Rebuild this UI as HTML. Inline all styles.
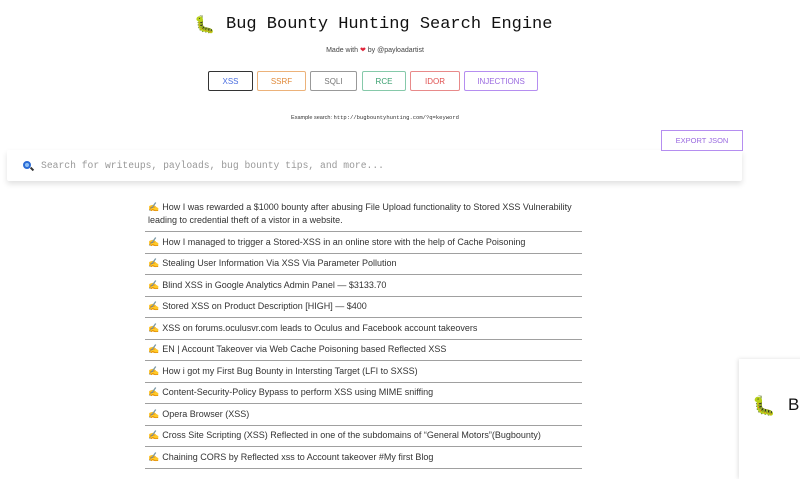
<!DOCTYPE html>
<html><head><meta charset="utf-8"><style>
*{margin:0;padding:0;box-sizing:border-box}
body{width:800px;height:470px;overflow:hidden;background:#fff;font-family:"Liberation Sans","Noto Sans CJK KR",sans-serif;position:relative;color:#333}
.title{position:absolute;left:226px;top:12px;font-family:"Liberation Mono",monospace;font-size:17px;color:#111;line-height:26px;white-space:nowrap}
.emo{position:absolute;left:194px;top:15px;font-family:"Noto Color Emoji","DejaVu Sans",sans-serif;font-size:17px;color:#2a2}
.made{position:absolute;top:46px;left:0;width:750px;text-align:center;font-size:7px;color:#444}
.btn{position:absolute;top:71px;height:20px;border:1px solid;border-radius:2px;font-size:8px;display:flex;align-items:center;justify-content:center}
.ex{position:absolute;top:114px;left:0;width:750px;text-align:center;font-size:5.5px;color:#333}
.ex code{font-family:"Liberation Mono",monospace}
.exp{position:absolute;left:661px;top:130px;width:82px;height:21px;border:1px solid #b58ef0;color:#9a6ae0;font-size:7.5px;display:flex;align-items:center;justify-content:center;background:#fff;z-index:2}
.search{position:absolute;left:7px;top:150px;width:735px;height:31px;background:#fff;box-shadow:0 3px 6px rgba(0,0,0,.12);border-radius:2px}
.search .ic{position:absolute;left:16px;top:11px;width:8px;height:8px;border:2px solid #2a6bd6;border-radius:50%;background:#8fc0f5}
.search .ic:after{content:"";position:absolute;left:5px;top:5px;width:4px;height:2px;background:#333;transform:rotate(45deg)}
.search .ph{position:absolute;left:34px;top:10px;font-family:"Liberation Mono",monospace;font-size:9.7px;color:#999}
.list{position:absolute;left:145px;top:200px;width:437px}
.it{border-bottom:1px solid #a0a0a0;font-size:9px;line-height:13px;padding:3.5px 3px 4px;color:#333;white-space:nowrap;overflow:hidden}
.it:first-child{padding-top:1px;white-space:normal}
.it b{font-weight:normal;color:#f0a020;margin-right:3px}
.side{position:absolute;left:739px;top:359px;width:70px;height:120px;background:#fff;box-shadow:-1px 0 4px rgba(0,0,0,.12)}
.side span{position:absolute;left:13px;top:35px;font-size:19px;color:#2a2}
.side i{position:absolute;left:49px;top:36px;font-style:normal;font-size:17px;color:#111}
</style></head><body>
<div class="emo">🐛</div>
<div class="title">Bug Bounty Hunting Search Engine</div>
<div class="made">Made with <span style="color:#e0243a">❤</span> by @payloadartist</div>
<div class="btn" style="left:208px;width:45px;border-color:#333;border-width:1.5px;color:#4a6ee0">XSS</div>
<div class="btn" style="left:257px;width:49px;border-color:#ecb27a;color:#e08a3a">SSRF</div>
<div class="btn" style="left:310px;width:47px;border-color:#999;color:#777">SQLI</div>
<div class="btn" style="left:362px;width:44px;border-color:#86c9aa;color:#3aa070">RCE</div>
<div class="btn" style="left:410px;width:50px;border-color:#e88a8a;color:#e05050">IDOR</div>
<div class="btn" style="left:464px;width:74px;border-color:#b58ef0;color:#9a6ae0">INJECTIONS</div>
<div class="ex">Example search: <code>http://bugbountyhunting.com/?q=keyword</code></div>
<div class="exp">EXPORT JSON</div>
<div class="search"><div class="ic"></div><div class="ph">Search for writeups, payloads, bug bounty tips, and more...</div></div>
<div class="list">
<div class="it"><b>✍</b>How I was rewarded a $1000 bounty after abusing File Upload functionality to Stored XSS Vulnerability leading to credential theft of a vistor in a website.</div>
<div class="it"><b>✍</b>How I managed to trigger a Stored-XSS in an online store with the help of Cache Poisoning</div>
<div class="it"><b>✍</b>Stealing User Information Via XSS Via Parameter Pollution</div>
<div class="it"><b>✍</b>Blind XSS in Google Analytics Admin Panel — $3133.70</div>
<div class="it"><b>✍</b>Stored XSS on Product Description [HIGH] — $400</div>
<div class="it"><b>✍</b>XSS on forums.oculusvr.com leads to Oculus and Facebook account takeovers</div>
<div class="it"><b>✍</b>EN | Account Takeover via Web Cache Poisoning based Reflected XSS</div>
<div class="it"><b>✍</b>How i got my First Bug Bounty in Intersting Target (LFI to SXSS)</div>
<div class="it"><b>✍</b>Content-Security-Policy Bypass to perform XSS using MIME sniffing</div>
<div class="it"><b>✍</b>Opera Browser (XSS)</div>
<div class="it"><b>✍</b>Cross Site Scripting (XSS) Reflected in one of the subdomains of “General Motors”(Bugbounty)</div>
<div class="it"><b>✍</b>Chaining CORS by Reflected xss to Account takeover #My first Blog</div>
</div>
<div class="side"><span>🐛</span><i>B</i></div>
</body></html>
